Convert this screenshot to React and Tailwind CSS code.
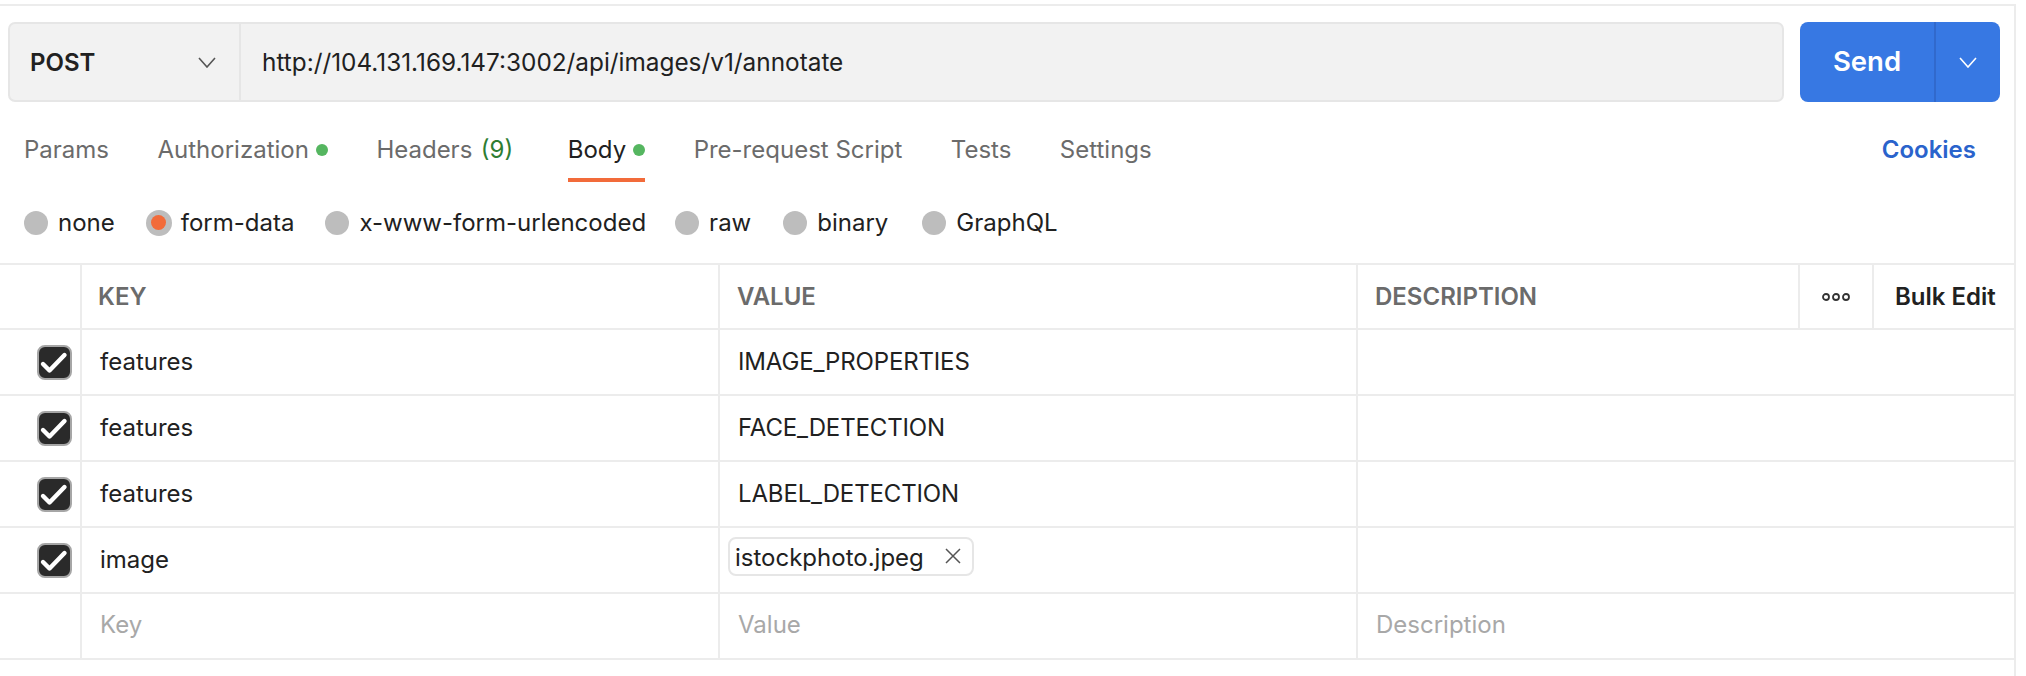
import React from 'react';

const tabs = [
  { label: 'Params' },
  { label: 'Authorization', dot: true },
  { label: 'Headers', count: '(9)' },
  { label: 'Body', dot: true, active: true },
  { label: 'Pre-request Script' },
  { label: 'Tests' },
  { label: 'Settings' },
];

const bodyTypes = [
  { label: 'none', cls: '' },
  { label: 'form-data', checked: true, cls: '' },
  { label: 'x-www-form-urlencoded', cls: '-mr-[2px]' },
  { label: 'raw', cls: 'mr-[1px]' },
  { label: 'binary', cls: 'mr-[3px]' },
  { label: 'GraphQL', cls: '' },
];

const rows = [
  { k: 'features', v: 'IMAGE_PROPERTIES' },
  { k: 'features', v: 'FACE_DETECTION' },
  { k: 'features', v: 'LABEL_DETECTION' },
  { k: 'image', file: 'istockphoto.jpeg' },
];

function Chevron({ className }) {
  return (
    <svg viewBox="0 0 18 11" className={className} fill="none" stroke="currentColor" strokeWidth="1.6">
      <path d="M1 1 9 10 17 1" />
    </svg>
  );
}

function Checkbox() {
  return (
    <div className="w-[35px] h-[35px] rounded-[8px] bg-[#2a2a2a] border-2 border-[#a6a6a6] flex items-center justify-center">
      <svg viewBox="0 0 31 31" className="w-[31px] h-[31px]" fill="none" stroke="#fff" strokeWidth="4.4" strokeLinecap="round" strokeLinejoin="round">
        <path d="M4 17l6.5 6.5L25.5 8" />
      </svg>
    </div>
  );
}

export default function App() {
  return (
    <div className="w-[2026px] h-[676px] bg-white overflow-hidden font-['Inter',sans-serif] text-[24px] text-[#212121]">
      <div className="w-[2016px] h-full border-r-2 border-[#ececec]">
        <div className="mt-[4px] border-t-2 border-[#ececec] pt-[16px] pl-[8px] pr-[14px] flex gap-[16px]">
          <div className="flex-1 h-[80px] flex bg-[#f2f2f2] border-2 border-[#e6e6e6] rounded-[7px]">
            <div className="w-[231px] flex items-center justify-between pl-[20px] pr-[23px] border-r-2 border-[#e6e6e6]">
              <span className="font-semibold pt-[2px]">POST</span>
              <Chevron className="w-[18px] h-[11px] text-[#555]" />
            </div>
            <div className="flex-1 flex items-center pl-[21px] text-[24.35px]">http://104.131.169.147:3002/api/images/v1/annotate</div>
          </div>
          <div className="w-[200px] h-[80px] flex bg-[#3778e3] rounded-[8px] text-white">
            <div className="w-[136px] flex items-center justify-center font-semibold text-[27.5px] border-r-2 border-[#3169cc]">Send</div>
            <div className="flex-1 flex items-center justify-center">
              <Chevron className="w-[18px] h-[11px]" />
            </div>
          </div>
        </div>

        <div className="h-[80px] flex pl-[24px] pr-[38px] gap-[48.5px] text-[#6b6b6b]">
          {tabs.map((t) => (
            <div key={t.label} className={`flex items-center gap-[7px] pt-[24px] pb-[4px] border-b-4 ${t.active ? 'border-[#f26b3a] text-[#212121]' : 'border-transparent'}`}>
              <span>{t.label}</span>
              {t.count && <span className="text-[#2e7d32] ml-[1.5px] mr-[6px]">{t.count}</span>}
              {t.dot && <span className="w-[12px] h-[12px] rounded-full bg-[#55b660]" />}
            </div>
          ))}
          <div className="ml-auto flex items-center pt-[16px] font-semibold text-[#2a63cc]">Cookies</div>
        </div>

        <div className="h-[81px] flex items-center pl-[24px] gap-[31px]">
          {bodyTypes.map((b) => (
            <div key={b.label} className={`flex items-center ${b.checked ? 'gap-[9px]' : 'gap-[10px]'} ${b.cls}`}>
              <span className={`rounded-full bg-[#bdbdbd] flex items-center justify-center ${b.checked ? 'w-[26px] h-[26px]' : 'w-[24px] h-[24px]'}`}>
                {b.checked && <span className="w-[15px] h-[15px] rounded-full bg-[#f26b3a]" />}
              </span>
              <span>{b.label}</span>
            </div>
          ))}
        </div>

        <div className="border-t-2 border-[#ececec]">
          <div className="h-[65px] flex items-center border-b-2 border-[#ececec] font-semibold text-[#6b6b6b]">
            <div className="w-[80px] h-full" />
            <div className="w-[638px] h-full flex items-center pl-[16px] border-l-2 border-[#ececec]">KEY</div>
            <div className="w-[638px] h-full flex items-center pl-[17px] border-l-2 border-[#ececec]">VALUE</div>
            <div className="w-[442px] h-full flex items-center pl-[17px] border-l-2 border-[#ececec]">DESCRIPTION</div>
            <div className="w-[74px] h-full flex items-center justify-center border-l-2 border-[#ececec]">
              <svg viewBox="0 0 28 8" className="w-[28px] h-[8px]" fill="none" stroke="#333" strokeWidth="1.8">
                <circle cx="4" cy="4" r="3" />
                <circle cx="14" cy="4" r="3" />
                <circle cx="24" cy="4" r="3" />
              </svg>
            </div>
            <div className="flex-1 h-full flex items-center pl-[21px] border-l-2 border-[#ececec] text-[#212121] whitespace-nowrap">Bulk Edit</div>
          </div>

          {rows.map((r, i) => (
            <div key={i} className="h-[66px] flex border-b-2 border-[#ececec]">
              <div className="w-[80px] flex items-center pl-[37px]">
                <Checkbox />
              </div>
              <div className="w-[638px] flex items-center pl-[18px] border-l-2 border-[#ececec]">{r.k}</div>
              <div className="w-[638px] flex items-center pl-[18px] border-l-2 border-[#ececec]">
                {r.file ? (
                  <div className="w-[246px] h-[39px] -ml-[10px] mb-[8px] flex items-center justify-between pl-[5px] pr-[11px] border-2 border-[#e6e6e6] rounded-[8px]">
                    <span className="pt-[3px]">{r.file}</span>
                    <svg viewBox="0 0 16 16" className="w-[16px] h-[16px]" fill="none" stroke="#555" strokeWidth="1.5">
                      <path d="M1 1l14 14M15 1 1 15" />
                    </svg>
                  </div>
                ) : <span className="tracking-[-0.15px]">{r.v}</span>}
              </div>
              <div className="flex-1 border-l-2 border-[#ececec]" />
            </div>
          ))}

          <div className="h-[66px] flex border-b-2 border-[#ececec] text-[#a8a8a8]">
            <div className="w-[80px]" />
            <div className="w-[638px] flex items-center pl-[18px] pb-[2px] border-l-2 border-[#ececec]">Key</div>
            <div className="w-[638px] flex items-center pl-[18px] pb-[2px] border-l-2 border-[#ececec]">Value</div>
            <div className="flex-1 flex items-center pl-[18px] pb-[2px] border-l-2 border-[#ececec]">Description</div>
          </div>
        </div>
      </div>
    </div>
  );
}
